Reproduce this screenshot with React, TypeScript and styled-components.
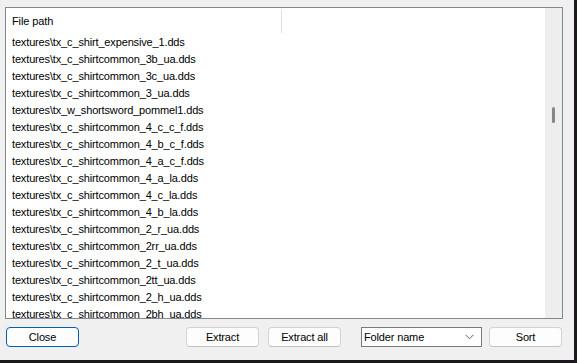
import React, { FC } from 'react'
import styled, { createGlobalStyle } from 'styled-components'

const GlobalStyle = createGlobalStyle`
  html, body {
    margin: 0;
    padding: 0;
    background: #1d1a1f;
  }
  body {
    font-family: "Liberation Sans", Arial, sans-serif;
    font-size: 11px;
    color: #000;
  }
`

const Screen = styled.div`
  width: 577px;
  height: 363px;
  display: grid;
  grid-template-columns: 574px 1fr;
  grid-template-rows: 360px 1fr;
  background: #1d1a1f;
  overflow: hidden;
`

const Dialog = styled.div`
  background: #f0f0f0;
  padding: 7px 11px 0 5px;
  display: flex;
  flex-direction: column;
`

const ListBox = styled.div`
  height: 310px;
  border: 1px solid #828790;
  background: #fff;
  display: grid;
  grid-template-columns: 1fr 17px;
`

const ListContent = styled.div`
  overflow: hidden;
`

const Header = styled.div`
  height: 26px;
  display: flex;
  align-items: flex-start;
`

const HeaderCell = styled.div<{ $width: number }>`
  width: ${p => p.$width}px;
  height: 24px;
  margin-top: 1px;
  padding-left: 6px;
  box-sizing: border-box;
  border-right: 1px solid #e3e3e3;
  line-height: 24px;
  letter-spacing: -0.1px;
`

const Row = styled.div`
  height: 17px;
  line-height: 17px;
  padding-left: 6px;
  white-space: nowrap;
  letter-spacing: -0.15px;
`

const ScrollTrack = styled.div`
  background: #eeeeee;
  display: flex;
  justify-content: center;
  padding-top: 99px;
  box-sizing: border-box;
`

const ScrollThumb = styled.div`
  width: 3px;
  height: 16px;
  border-radius: 2px;
  background: #868686;
`

const Footer = styled.div`
  margin-top: 8px;
  padding: 0 1px;
  display: flex;
  align-items: center;
`

const Button = styled.button<{ $primary?: boolean; $gap?: number }>`
  width: 73px;
  height: 20px;
  margin-left: ${p => (p.$gap === undefined ? 0 : p.$gap)}px;
  padding: 0;
  border: 1px solid ${p => (p.$primary ? '#005fb8' : '#d3d3d3')};
  border-bottom-color: ${p => (p.$primary ? '#005fb8' : '#c2c2c2')};
  border-radius: 4px;
  background: #fdfdfd;
  font-family: "Liberation Sans", Arial, sans-serif;
  font-size: 11px;
  letter-spacing: -0.15px;
  color: #000;
  box-sizing: border-box;
`

const Spacer = styled.div`
  flex: 1;
`

const Combo = styled.div`
  width: 121px;
  height: 20px;
  margin-left: 20px;
  border: 1px solid #7a7a7a;
  background: #fff;
  box-sizing: border-box;
  display: flex;
  align-items: center;
  justify-content: space-between;
  padding: 0 7px 0 2px;
  letter-spacing: -0.15px;
`

const RightEdge = styled.div`
  background: #1d1a1f;
  grid-row: 1 / 3;
  grid-column: 2;
`

const BottomEdge = styled.div`
  background: #1b181c;
`

const files = [
  'textures\\tx_c_shirt_expensive_1.dds',
  'textures\\tx_c_shirtcommon_3b_ua.dds',
  'textures\\tx_c_shirtcommon_3c_ua.dds',
  'textures\\tx_c_shirtcommon_3_ua.dds',
  'textures\\tx_w_shortsword_pommel1.dds',
  'textures\\tx_c_shirtcommon_4_c_c_f.dds',
  'textures\\tx_c_shirtcommon_4_b_c_f.dds',
  'textures\\tx_c_shirtcommon_4_a_c_f.dds',
  'textures\\tx_c_shirtcommon_4_a_la.dds',
  'textures\\tx_c_shirtcommon_4_c_la.dds',
  'textures\\tx_c_shirtcommon_4_b_la.dds',
  'textures\\tx_c_shirtcommon_2_r_ua.dds',
  'textures\\tx_c_shirtcommon_2rr_ua.dds',
  'textures\\tx_c_shirtcommon_2_t_ua.dds',
  'textures\\tx_c_shirtcommon_2tt_ua.dds',
  'textures\\tx_c_shirtcommon_2_h_ua.dds',
  'textures\\tx_c_shirtcommon_2bh_ua.dds',
]

const Chevron: FC = () => (
  <svg width="9" height="6" viewBox="0 0 9 6">
    <path d="M0.5 0.8 L4.5 4.8 L8.5 0.8" fill="none" stroke="#5f5f5f" strokeWidth="1" />
  </svg>
)

const App: FC = () => {
  return (
    <>
      <GlobalStyle />
      <Screen>
        <Dialog>
          <ListBox>
            <ListContent>
              <Header>
                <HeaderCell $width={276}>File path</HeaderCell>
              </Header>
              {files.map((f) => (
                <Row key={f}>{f}</Row>
              ))}
            </ListContent>
            <ScrollTrack>
              <ScrollThumb />
            </ScrollTrack>
          </ListBox>
          <Footer>
            <Button type="button" $primary>Close</Button>
            <Spacer />
            <Button type="button">Extract</Button>
            <Button type="button" $gap={9}>Extract all</Button>
            <Combo>
              <span>Folder name</span>
              <Chevron />
            </Combo>
            <Button type="button" $gap={7}>Sort</Button>
          </Footer>
        </Dialog>
        <RightEdge />
        <BottomEdge />
      </Screen>
    </>
  )
}

export default App
